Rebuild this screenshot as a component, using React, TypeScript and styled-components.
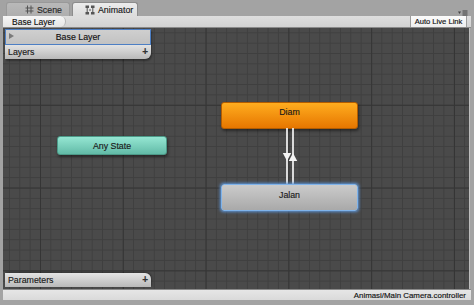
import React from "react";
import styled, { createGlobalStyle } from "styled-components";

const GlobalStyle = createGlobalStyle`
  html, body {
    margin: 0;
    padding: 0;
    background: #a3a3a3;
  }
  * {
    box-sizing: border-box;
  }
`;

const Window = styled("div")`
  width: 474px;
  height: 305px;
  display: flex;
  flex-direction: column;
  background: #a3a3a3;
  font-family: "Liberation Sans", Arial, sans-serif;
  font-size: 8px;
  color: #111;
  -webkit-text-stroke: 0.15px #111;
  overflow: hidden;
`;

const TabBar = styled("div")`
  height: 16px;
  display: flex;
  align-items: flex-end;
  padding: 0 6px;
  gap: 2px;
  position: relative;
`;

const Tab = styled("div")<{ active?: boolean }>`
  width: ${(p) => (p.active ? 66 : 64)}px;
  height: 14px;
  border-radius: 3px 3px 0 0;
  border: 1px solid ${(p) => (p.active ? "#8c8c8c" : "#999")};
  border-bottom: none;
  background: ${(p) =>
    p.active
      ? "linear-gradient(#ececec, #dcdcdc)"
      : "linear-gradient(#b9b9b9, #aeaeae)"};
  display: flex;
  align-items: center;
  gap: 3px;
  padding-left: ${(p) => (p.active ? 12 : 18)}px;
  font-size: 8.8px;
  white-space: nowrap;
  color: ${(p) => (p.active ? "#1a1a1a" : "#333")};
`;

const MenuIcon = styled("div")`
  position: absolute;
  right: 6px;
  top: 10px;
  width: 10px;
  height: 6px;
  display: flex;
`;

const Toolbar = styled("div")`
  height: 12px;
  margin: 0 3px;
  display: flex;
  align-items: stretch;
  justify-content: space-between;
  background: linear-gradient(#dedede, #d2d2d2);
  border-bottom: 1px solid #8a8a8a;
`;

const Breadcrumb = styled("div")`
  width: 63px;
  padding-left: 9px;
  display: flex;
  align-items: center;
  font-size: 8.5px;
  background: linear-gradient(#f6f6f6, #e6e6e6);
  border-radius: 0 7px 7px 0;
  border-right: 1px solid #b5b5b5;
`;

const LiveLinkButton = styled("div")`
  width: 57px;
  margin-right: 4px;
  display: flex;
  align-items: center;
  justify-content: center;
  font-size: 7.6px;
  background: linear-gradient(#fbfbfb, #eeeeee);
  border-left: 1px solid #9c9c9c;
  border-right: 1px solid #9c9c9c;
`;

const Canvas = styled("div")`
  flex: 1;
  margin: 0 4px 0 3px;
  position: relative;
  background-color: #4a4a4a;
  background-image: linear-gradient(90deg, #353535 1px, transparent 1px),
    linear-gradient(#353535 1px, transparent 1px),
    linear-gradient(90deg, #3f3f3f 1px, transparent 1px),
    linear-gradient(#3f3f3f 1px, transparent 1px);
  background-size: 82.8px 82.8px, 82.8px 82.8px, 10.35px 10.35px,
    10.35px 10.35px;
  background-position: 37px -6px, 37px -6px, 37px -6px, 37px -6px;
  border-right: 1px solid #bdbdbd;
  overflow: hidden;
`;

const SidePanels = styled("div")`
  position: absolute;
  left: 2px;
  top: 1px;
  bottom: 2px;
  width: 146px;
  display: flex;
  flex-direction: column;
  justify-content: space-between;
`;

const LayerGroup = styled("div")`
  display: flex;
  flex-direction: column;
  box-shadow: 1px 2px 2px rgba(0, 0, 0, 0.35);
  border-radius: 0 0 6px 0;
`;

const LayerRow = styled("div")`
  height: 16px;
  display: flex;
  align-items: center;
  position: relative;
  justify-content: center;
  background: linear-gradient(#cfcfcf, #c2c2c2);
  border: 1px solid #4d7fc4;
  font-size: 8.8px;
`;

const Arrow = styled("span")`
  position: absolute;
  left: 3px;
  top: 3px;
  width: 0;
  height: 0;
  border-top: 3.5px solid transparent;
  border-bottom: 3.5px solid transparent;
  border-left: 5px solid #7a7a7a;
`;

const PanelHeader = styled("div")<{ rounded: "top" | "bottom" }>`
  height: 14px;
  display: flex;
  align-items: center;
  justify-content: space-between;
  padding: 0 3px 0 3px;
  font-size: 8.8px;
  color: #222;
  background: linear-gradient(#e3e3e3, #b9b9b9);
  border-radius: ${(p) => (p.rounded === "top" ? "0 6px 0 0" : "0 0 6px 0")};
  box-shadow: ${(p) =>
    p.rounded === "top" ? "1px -1px 2px rgba(0,0,0,0.3)" : "none"};
`;

const Plus = styled("span")`
  font-size: 10px;
  font-weight: bold;
  color: #333;
  line-height: 1;
`;

const StateNode = styled("div")<{ kind: "any" | "default" | "normal" }>`
  position: absolute;
  display: flex;
  justify-content: center;
  font-size: 8.8px;
  color: #1c1c1c;
  border-radius: 3px;
  background: ${(p) =>
    p.kind === "any"
      ? "linear-gradient(#95e6d3, #62bba7)"
      : p.kind === "default"
      ? "linear-gradient(#ffad1f, #e67600)"
      : "linear-gradient(#cbcbcb, #a9a9a9)"};
  border: 1px solid
    ${(p) =>
      p.kind === "any" ? "#4c9a88" : p.kind === "default" ? "#b35c00" : "#7fb3ea"};
  box-shadow: ${(p) =>
    p.kind === "normal"
      ? "0 0 3px 1px #5c93d6"
      : "1px 2px 3px rgba(0, 0, 0, 0.45)"};
`;

const StatusBar = styled("div")`
  height: 11px;
  margin: 0 3px 5px 3px;
  display: flex;
  align-items: center;
  justify-content: flex-end;
  padding-right: 5px;
  font-size: 7.9px;
  background: linear-gradient(#e6e6e6, #dadada);
  border-top: 1px solid #8a8a8a;
`;

const Transitions = () => (
  <svg
    width="16"
    height="56"
    viewBox="0 0 16 56"
    style={{ position: "absolute", left: 279, top: 100 }}
  >
    <line x1="5" y1="0" x2="5" y2="56" stroke="#f4f4f4" strokeWidth="1.7" />
    <line x1="11" y1="0" x2="11" y2="56" stroke="#f4f4f4" strokeWidth="1.7" />
    <polygon points="0.8,25 9.2,25 5,33" fill="#f4f4f4" />
    <polygon points="6.8,33 15.2,33 11,25" fill="#f4f4f4" />
  </svg>
);

const SceneGlyph = () => (
  <svg width="9" height="9" viewBox="0 0 9 9">
    <path
      d="M2.5 0.5 V8.5 M6 0.5 V8.5 M0.5 3 H8.5 M0.5 6 H8.5"
      stroke="#555"
      strokeWidth="1"
      fill="none"
    />
  </svg>
);

const AnimatorGlyph = () => (
  <svg width="10" height="10" viewBox="0 0 10 10">
    <rect x="0.5" y="0.5" width="3.5" height="2.5" fill="#555" />
    <rect x="6" y="0.5" width="3.5" height="2.5" fill="#555" />
    <rect x="0.5" y="7" width="3.5" height="2.5" fill="#555" />
    <rect x="6" y="7" width="3.5" height="2.5" fill="#555" />
    <path d="M2.2 3 V7 M7.8 3 V7 M4 5 H6" stroke="#555" strokeWidth="1" />
  </svg>
);

export default function App() {
  return (
    <>
      <GlobalStyle />
      <Window>
        <TabBar>
          <Tab>
            <SceneGlyph />
            Scene
          </Tab>
          <Tab active>
            <AnimatorGlyph />
            Animator
          </Tab>
          <MenuIcon>
            <svg width="10" height="6" viewBox="0 0 10 6">
              <polygon points="0,1.5 3,1.5 1.5,4" fill="#444" />
              <rect x="4.5" y="0.5" width="5" height="1" fill="#444" />
              <rect x="4.5" y="2.5" width="5" height="1" fill="#444" />
              <rect x="4.5" y="4.5" width="5" height="1" fill="#444" />
            </svg>
          </MenuIcon>
        </TabBar>
        <Toolbar>
          <Breadcrumb>Base Layer</Breadcrumb>
          <LiveLinkButton>Auto Live Link</LiveLinkButton>
        </Toolbar>
        <Canvas>
          <StateNode
            kind="any"
            style={{ left: 54, top: 108, width: 110, height: 19, alignItems: "center" }}
          >
            Any State
          </StateNode>
          <StateNode
            kind="default"
            style={{ left: 218, top: 74, width: 137, height: 27, paddingTop: 4 }}
          >
            Diam
          </StateNode>
          <Transitions />
          <StateNode
            kind="normal"
            style={{ left: 218, top: 156, width: 137, height: 27, paddingTop: 5 }}
          >
            Jalan
          </StateNode>
          <SidePanels>
            <LayerGroup>
              <LayerRow>
                <Arrow />
                Base Layer
              </LayerRow>
              <PanelHeader rounded="bottom">
                Layers
                <Plus>+</Plus>
              </PanelHeader>
            </LayerGroup>
            <PanelHeader rounded="top">
              Parameters
              <Plus>+</Plus>
            </PanelHeader>
          </SidePanels>
        </Canvas>
        <StatusBar>Animasi/Main Camera.controller</StatusBar>
      </Window>
    </>
  );
}
